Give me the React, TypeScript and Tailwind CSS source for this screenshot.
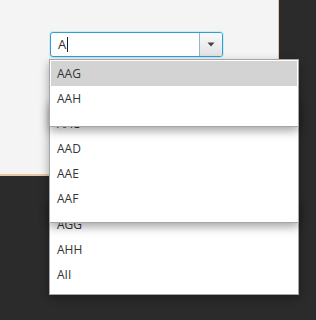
import React from "react";

const font = { fontFamily: '"Open Sans", "Noto Sans", sans-serif' };

function Row({ label, selected }: { label: string; selected?: boolean }) {
  return (
    <div
      className={`h-[25px] flex items-center pl-[6px] text-[12px] text-[#333333] ${
        selected ? "bg-[#d3d3d3] mx-[1px]" : "mx-[1px]"
      }`}
    >
      {label}
    </div>
  );
}

export default function App() {
  return (
    <div className="relative w-[316px] h-[320px] bg-[#2b2b2b] overflow-hidden" style={font}>
      <div className="w-[279px] h-[176px] bg-[#f4f4f4] border-r-[1px] border-b-[2px] border-[#e9c7a4] pt-[32px] pl-[50px]">
        <div className="w-[173px] h-[25px] flex rounded-[3px] border border-[#2aa0d8] bg-white shadow-[0_0_0_1px_rgba(42,160,216,0.15)] overflow-hidden">
          <div className="flex-1 flex items-center pl-[7px] text-[13px] text-[#333333]">
            <span>A</span>
            <span className="w-px h-[15px] bg-[#222] ml-[1px]" />
          </div>
          <div className="w-[23px] flex items-center justify-center border-l border-[#8fb8cc] bg-gradient-to-b from-[#fafafa] to-[#e2e2e2]">
            <svg width="8" height="5" viewBox="0 0 8 5">
              <path d="M0.5 0.5 L7.5 0.5 L4 4.5 Z" fill="#444" />
            </svg>
          </div>
        </div>
      </div>

      {/* bottom popup */}
      <div className="absolute left-[49px] top-[200px] w-[250px] h-[95px] bg-white border border-[#a6a6a6] shadow-[0_3px_8px_rgba(0,0,0,0.35)] pt-[11px]">
        <Row label="AGG" />
        <Row label="AHH" />
        <Row label="AII" />
      </div>

      {/* middle popup */}
      <div className="absolute left-[49px] top-[100px] w-[250px] h-[123px] bg-white border border-[#a6a6a6] shadow-[0_4px_9px_rgba(0,0,0,0.35)] pt-[10px]">
        <Row label="AAC" />
        <Row label="AAD" />
        <Row label="AAE" />
        <Row label="AAF" />
      </div>

      {/* top popup */}
      <div className="absolute left-[49px] top-[59px] w-[250px] h-[68px] bg-white border border-[#a6a6a6] shadow-[0_4px_9px_rgba(0,0,0,0.35)] pt-[1px]">
        <Row label="AAG" selected />
        <Row label="AAH" />
      </div>
    </div>
  );
}
